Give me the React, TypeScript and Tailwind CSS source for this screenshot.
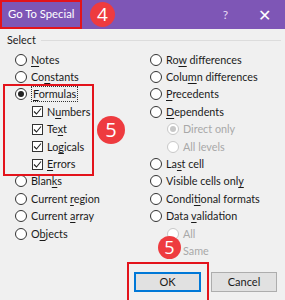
import React from "react";

const U = ({ t, i }: { t: string; i: number }) => (
  <>
    {t.slice(0, i)}
    <span className="underline underline-offset-2">{t[i]}</span>
    {t.slice(i + 1)}
  </>
);

const Radio = ({ checked, disabled }: { checked?: boolean; disabled?: boolean }) => (
  <span
    className={`flex h-[12px] w-[12px] shrink-0 items-center justify-center rounded-full border bg-white ${
      disabled ? "border-[#c8c8c8]" : "border-[#333]"
    }`}
  >
    {checked && (
      <span className={`h-[6px] w-[6px] rounded-full ${disabled ? "bg-[#c8c8c8]" : "bg-[#222]"}`} />
    )}
  </span>
);

const Check = () => (
  <span className="flex h-[11px] w-[11px] shrink-0 items-center justify-center border border-[#333] bg-white">
    <svg width="9" height="9" viewBox="0 0 9 9">
      <path d="M1 4.5 L3.5 7 L8 1.5" fill="none" stroke="#222" strokeWidth="1.1" />
    </svg>
  </span>
);

type Item = { label: React.ReactNode; kind: "radio" | "check"; indent?: boolean; checked?: boolean; disabled?: boolean; focus?: boolean };

const Row = ({ it }: { it: Item }) => (
  <div className={`flex h-[17.4px] items-center ${it.indent ? "pl-[17px]" : ""}`}>
    {it.kind === "radio" ? <Radio checked={it.checked} disabled={it.disabled} /> : <Check />}
    <span
      className={`ml-[4px] leading-[14px] ${it.disabled ? "text-[#a8a8a8]" : "text-[#1a1a1a]"} ${
        it.focus ? "border border-dotted border-[#333] px-px" : ""
      }`}
    >
      {it.label}
    </span>
  </div>
);

const left: Item[] = [
  { label: <U t="Notes" i={0} />, kind: "radio" },
  { label: <U t="Constants" i={2} />, kind: "radio" },
  { label: <U t="Formulas" i={0} />, kind: "radio", checked: true, focus: true },
  { label: <U t="Numbers" i={1} />, kind: "check", indent: true },
  { label: <U t="Text" i={2} />, kind: "check", indent: true },
  { label: <U t="Logicals" i={2} />, kind: "check", indent: true },
  { label: <U t="Errors" i={0} />, kind: "check", indent: true },
  { label: <U t="Blanks" i={4} />, kind: "radio" },
  { label: <U t="Current region" i={8} />, kind: "radio" },
  { label: <U t="Current array" i={8} />, kind: "radio" },
  { label: <U t="Objects" i={1} />, kind: "radio" },
];

const right: Item[] = [
  { label: <U t="Row differences" i={2} />, kind: "radio" },
  { label: <U t="Column differences" i={4} />, kind: "radio" },
  { label: <U t="Precedents" i={0} />, kind: "radio" },
  { label: <U t="Dependents" i={0} />, kind: "radio" },
  { label: "Direct only", kind: "radio", indent: true, disabled: true, checked: true },
  { label: "All levels", kind: "radio", indent: true, disabled: true },
  { label: <U t="Last cell" i={2} />, kind: "radio" },
  { label: <U t="Visible cells only" i={17} />, kind: "radio" },
  { label: <U t="Conditional formats" i={5} />, kind: "radio" },
  { label: <U t="Data validation" i={5} />, kind: "radio" },
  { label: "All", kind: "radio", indent: true, disabled: true },
  { label: "Same", kind: "radio", indent: true, disabled: true },
];

const Badge = ({ n, cls }: { n: string; cls: string }) => (
  <div
    className={`absolute flex items-center justify-center rounded-full bg-[#ee3b3f] text-white ${cls}`}
    style={{ fontFamily: "'Open Sans', 'Noto Sans', sans-serif" }}
  >
    {n}
  </div>
);

export default function App() {
  return (
    <div
      className="relative h-[300px] w-[285px] overflow-hidden bg-[#f0f0f0] text-[10.8px]"
      style={{ fontFamily: "Lato, 'Noto Sans', sans-serif" }}
    >
      <div className="flex h-[29px] items-center bg-[#7e56b6] pl-[8px] pr-[14px] text-white">
        <span className="text-[11.3px]">Go To Special</span>
        <span className="ml-auto text-[12px] text-[#e8dcf5]">?</span>
        <span className="ml-[30px] text-[16px] font-light leading-none">✕</span>
      </div>
      <div className="flex h-[22px] items-center pl-[7px] pr-[4px]">
        <span className="text-[#1a1a1a]">Select</span>
        <div className="ml-[5px] h-px flex-1 bg-[#dcdcdc]" />
      </div>
      <div className="flex">
        <div className="w-[150px] pl-[15px]">
          {left.map((it, i) => (
            <Row key={i} it={it} />
          ))}
        </div>
        <div className="flex-1">
          {right.map((it, i) => (
            <Row key={i} it={it} />
          ))}
        </div>
      </div>
      <div className="absolute left-[134px] top-[272px] flex gap-[10px]">
        <button className="h-[20px] w-[67px] border border-[#0078d7] bg-[#e1e1e1] text-[11px] text-[#1a1a1a] outline outline-1 -outline-offset-2 outline-[#0078d7]">
          OK
        </button>
        <button className="h-[20px] w-[66px] border border-[#adadad] bg-[#e1e1e1] text-[11px] text-[#1a1a1a]">
          Cancel
        </button>
      </div>
      {/* highlight boxes */}
      <div className="absolute left-0 top-0 h-[29px] w-[82px] border-2 border-[#e3131b]" />
      <div className="absolute left-[3px] top-[84px] h-[92px] w-[91px] border-2 border-[#e3131b]" />
      <div className="absolute left-[127px] top-[262px] h-[40px] w-[82px] border-2 border-[#e3131b]" />
      <Badge n="4" cls="left-[90px] top-[2px] h-[25px] w-[25px] text-[19px]" />
      <Badge n="5" cls="left-[97px] top-[116px] h-[28px] w-[28px] text-[20px]" />
      <Badge n="5" cls="left-[158px] top-[236px] h-[23px] w-[23px] text-[18px]" />
    </div>
  );
}
